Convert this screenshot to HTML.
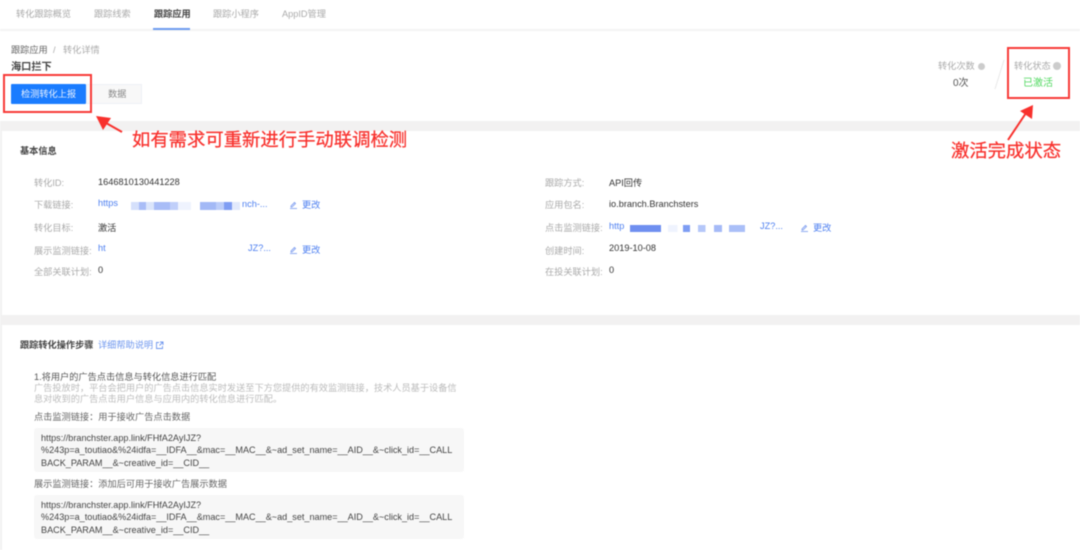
<!DOCTYPE html>
<html lang="zh-CN"><head><meta charset="utf-8"><title>转化详情</title>
<style>
html,body{margin:0;padding:0;width:1080px;height:550px;overflow:hidden;background:#fff}
body{position:relative;font-family:"Liberation Sans","Noto Sans CJK SC",sans-serif;font-size:9.2px;color:#333}
#w{position:absolute;left:0;top:0;width:1080px;height:550px;filter:blur(.45px)}
.t,.b{position:absolute;white-space:nowrap;line-height:14px}
.b{background:#f2f1f1}
.g{color:#a9a9a9}.n{color:#aaa}.d{color:#333}.l{color:#4d7ff0}
.r{color:#f8312d;font-size:18.35px!important;-webkit-text-stroke:.25px #f8312d}
.m{position:absolute}
.box{position:absolute;left:34px;width:430px;height:44px;background:#f7f7f7;border-radius:3px}
.code{position:absolute;left:41px;font-size:9.1px;line-height:12.4px;color:#444;white-space:nowrap}
.rb{position:absolute;border:2px solid #f83a38;box-sizing:border-box}
</style></head><body><div id="w">
<div class="b" style="left:0;top:29px;width:1080px;height:2px;background:#f3f3f3"></div>
<div class="t n" style="left:16px;top:7px">转化跟踪概览</div>
<div class="t n" style="left:94px;top:7px">跟踪线索</div>
<div class="t" style="left:154px;top:7px;color:#444;font-weight:bold">跟踪应用</div>
<div class="t n" style="left:213px;top:7px">跟踪小程序</div>
<div class="t n" style="left:282px;top:7px">AppID管理</div>
<div class="m" style="left:153px;top:28px;width:37px;height:2px;background:#6d9cf0"></div>

<div class="t" style="left:11px;top:43px;color:#666">跟踪应用</div>
<div class="t n" style="left:53px;top:43px">/</div>
<div class="t n" style="left:63px;top:43px">转化详情</div>
<div class="t" style="left:11px;top:61px;font-size:10.2px;font-weight:bold;color:#444">海口拦下</div>
<div class="m" style="left:11px;top:84px;width:75px;height:20px;background:#1a7cff;border-radius:1px"></div>
<div class="t" style="left:21px;top:87px;color:#e8f1ff">检测转化上报</div>
<div class="m" style="left:86px;top:84px;width:56px;height:20px;background:#f8f8f8;border:1px solid #eef0f5;box-sizing:border-box"></div>
<div class="t" style="left:108px;top:87px;color:#888">数据</div>
<div class="rb" style="left:3px;top:74px;width:89px;height:39px"></div>

<div class="t n" style="left:938px;top:59px">转化次数</div>
<div class="m" style="left:978px;top:63px;width:7px;height:7px;border-radius:50%;background:#ccc"></div>
<div class="t" style="left:953px;top:77px;font-size:10px;color:#555">0次</div>
<svg class="m" style="left:990px;top:58px" width="16" height="34"><path d="M14 2L5 31" stroke="#e8e8e8" fill="none"/></svg>
<div class="t n" style="left:1014px;top:59px">转化状态</div>
<div class="m" style="left:1053px;top:62px;width:8px;height:8px;border-radius:50%;background:#ccc"></div>
<div class="t" style="left:1023px;top:77px;font-size:10px;color:#4fd85f">已激活</div>
<div class="rb" style="left:1007px;top:47px;width:63px;height:52px"></div>

<div class="b" style="left:0;top:121px;width:1080px;height:10px"></div>
<div class="b" style="left:0;top:131px;width:2px;height:185px"></div>
<div class="t r" style="left:132px;top:130px;line-height:20px">如有需求可重新进行手动联调检测</div>
<svg class="m" style="left:90px;top:110px" width="40" height="30"><path d="M9 9L32 22" stroke="#f8312d" stroke-width="2" fill="none"/><path d="M6 6L21 8L13 20Z" fill="#f8312d"/></svg>
<div class="t r" style="left:951px;top:141px;line-height:20px">激活完成状态</div>
<svg class="m" style="left:1000px;top:100px" width="40" height="45"><path d="M8 40L26 13" stroke="#f8312d" stroke-width="2" fill="none"/><path d="M33 5L32 19L20 11Z" fill="#f8312d"/></svg>

<div class="t" style="left:20px;top:144px;font-weight:bold;color:#444">基本信息</div>

<div class="t n" style="left:34px;top:176px">转化ID:</div>
<div class="t d" style="left:98px;top:175px">1646810130441228</div>
<div class="t n" style="left:34px;top:198px">下载链接:</div>
<div class="t l" style="left:98px;top:196px">https</div>
<div class="m" style="left:131px;top:202px;width:60px;height:8px;background:linear-gradient(90deg,#d5e0fb 0 13%,#a9bdf7 13% 25%,#dbe5fb 25% 38%,#a9bdf7 38% 65%,#c0cffa 65% 78%,#eff3fe 78% 100%)"></div>
<div class="m" style="left:200px;top:202px;width:40px;height:8px;background:linear-gradient(90deg,#a3b9f6 0 40%,#bccdf9 40% 60%,#7f9df3 60% 80%,#e2e9fc 80% 100%)"></div>
<div class="t l" style="left:242px;top:197px">nch-...</div>
<div class="t n" style="left:34px;top:221px">转化目标:</div>
<div class="t d" style="left:98px;top:221px">激活</div>
<div class="t n" style="left:34px;top:244px">展示监测链接:</div>
<div class="t l" style="left:98px;top:241px">ht</div>
<div class="t l" style="left:248px;top:241px">JZ?...</div>
<div class="t n" style="left:34px;top:265px">全部关联计划:</div>
<div class="t d" style="left:98px;top:263px">0</div>

<svg class="m" style="left:289px;top:200px" width="9" height="10"><path d="M1 8.5H8M2 6L5.5 2.5L6.5 3.5L3 7H2Z" stroke="#6f92ee" stroke-width=".8" fill="none"/></svg>
<div class="t l" style="left:302px;top:198px">更改</div>
<svg class="m" style="left:289px;top:245px" width="9" height="10"><path d="M1 8.5H8M2 6L5.5 2.5L6.5 3.5L3 7H2Z" stroke="#6f92ee" stroke-width=".8" fill="none"/></svg>
<div class="t l" style="left:302px;top:243px">更改</div>

<div class="t n" style="left:545px;top:176px">跟踪方式:</div>
<div class="t d" style="left:609px;top:176px">API回传</div>
<div class="t n" style="left:545px;top:198px">应用包名:</div>
<div class="t d" style="left:609px;top:197px">io.branch.Branchsters</div>
<div class="t n" style="left:545px;top:221px">点击监测链接:</div>
<div class="t l" style="left:609px;top:219px">http</div>
<div class="m" style="left:630px;top:225px;width:31px;height:7px;background:#6f8ff0"></div>
<div class="m" style="left:668px;top:225px;width:58px;height:7px;background:linear-gradient(90deg,#eff3fe 0 16%,#fff 16% 26%,#7e9df3 26% 38%,#fff 38% 52%,#b5c7f9 52% 65%,#fff 65% 79%,#a5baf7 79% 93%,#fff 93% 100%)"></div>
<div class="m" style="left:729px;top:225px;width:16px;height:7px;background:#aabff8"></div>
<div class="t l" style="left:760px;top:219px">JZ?...</div>
<svg class="m" style="left:800px;top:223px" width="9" height="10"><path d="M1 8.5H8M2 6L5.5 2.5L6.5 3.5L3 7H2Z" stroke="#6f92ee" stroke-width=".8" fill="none"/></svg>
<div class="t l" style="left:813px;top:221px">更改</div>
<div class="t n" style="left:545px;top:244px">创建时间:</div>
<div class="t d" style="left:609px;top:241px">2019-10-08</div>
<div class="t n" style="left:545px;top:265px">在投关联计划:</div>
<div class="t d" style="left:609px;top:263px">0</div>

<div class="b" style="left:0;top:315px;width:1080px;height:10px"></div>
<div class="b" style="left:0;top:325px;width:2px;height:225px"></div>
<div class="t" style="left:20px;top:338px;font-weight:bold;color:#444">跟踪转化操作步骤</div>
<div class="t l" style="left:98px;top:338px;color:#6f97ee">详细帮助说明</div>
<svg class="m" style="left:155px;top:341px" width="9" height="9"><path d="M4 1.5H1.5V7.5H7.5V5M5 1H8V4M8 1L4.5 4.5" stroke="#6f97ee" stroke-width=".9" fill="none"/></svg>

<div class="t" style="left:34px;top:370px;color:#555">1.将用户的广告点击信息与转化信息进行匹配</div>
<div class="t" style="left:34px;top:381px;color:#bbb">广告投放时，平台会把用户的广告点击信息实时发送至下方您提供的有效监测链接，技术人员基于设备信</div>
<div class="t" style="left:34px;top:392px;color:#bbb">息对收到的广告点击用户信息与应用内的转化信息进行匹配。</div>
<div class="t" style="left:34px;top:410px;color:#666">点击监测链接：用于接收广告点击数据</div>
<div class="box" style="top:428px"></div>
<div class="code" style="top:432px">https://branchster.app.link/FHfA2AyIJZ?<br>%243p=a_toutiao&amp;%24idfa=__IDFA__&amp;mac=__MAC__&amp;~ad_set_name=__AID__&amp;~click_id=__CALL<br>BACK_PARAM__&amp;~creative_id=__CID__</div>
<div class="t" style="left:34px;top:477px;color:#666">展示监测链接：添加后可用于接收广告展示数据</div>
<div class="box" style="top:495px"></div>
<div class="code" style="top:499px">https://branchster.app.link/FHfA2AyIJZ?<br>%243p=a_toutiao&amp;%24idfa=__IDFA__&amp;mac=__MAC__&amp;~ad_set_name=__AID__&amp;~click_id=__CALL<br>BACK_PARAM__&amp;~creative_id=__CID__</div>
</div></body></html>
